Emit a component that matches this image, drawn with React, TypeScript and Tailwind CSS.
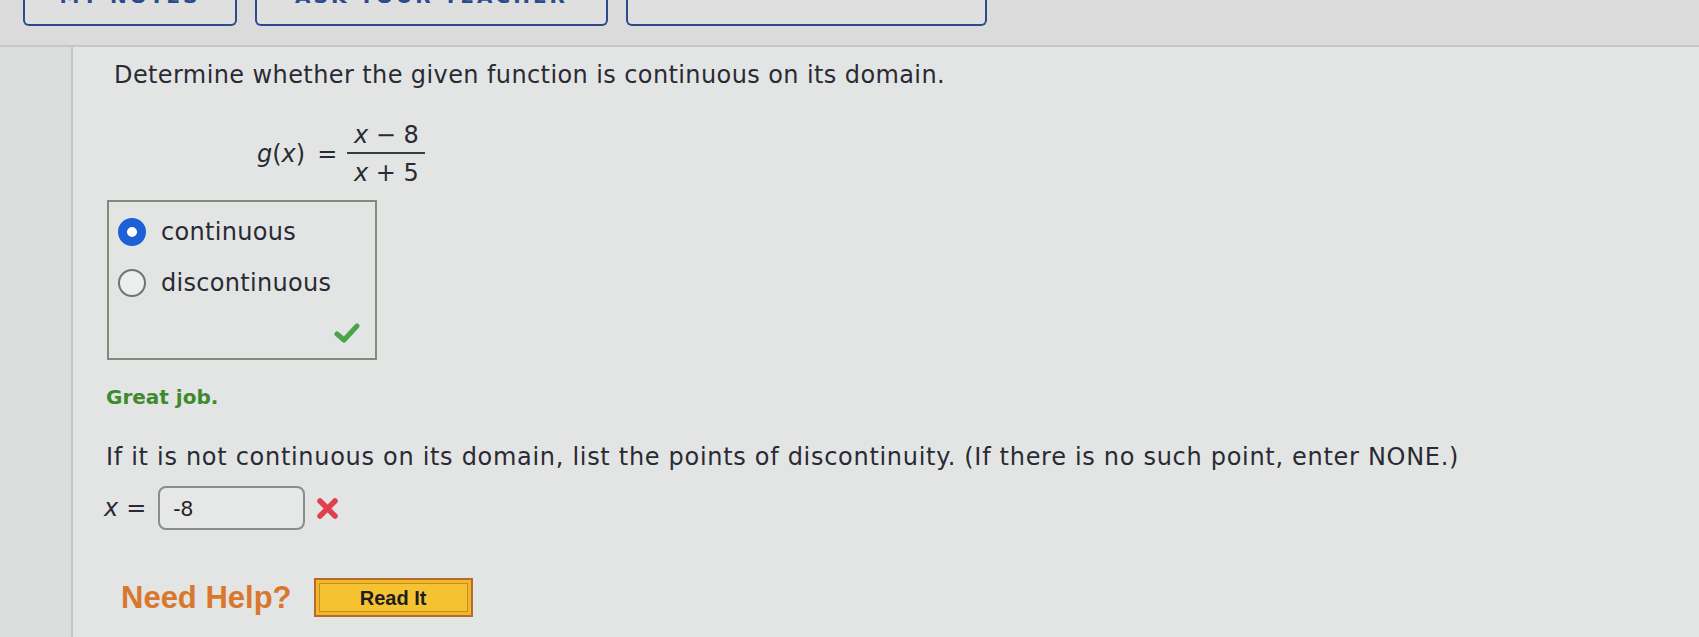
import React from "react";

const dv = { fontFamily: '"DejaVu Sans", Verdana, sans-serif' };
const lib = { fontFamily: '"Liberation Sans", Arial, sans-serif' };

function TopButton({ w, label }: { w: string; label?: string }) {
  return (
    <div
      className={`${w} h-[26px] border-2 border-t-0 border-[#2b4b8c] rounded-b-[6px] bg-[#dedfde] overflow-hidden flex justify-center items-start`}
    >
      {label ? (
        <span
          className="-mt-[14px] text-[20px] leading-[20px] font-bold tracking-[3px] text-[#2b4b8c]"
          style={dv}
        >
          {label}
        </span>
      ) : null}
    </div>
  );
}

function Check() {
  return (
    <svg width="26" height="22" viewBox="0 0 26 22">
      <path
        d="M3 12 L10 18 L23 4"
        fill="none"
        stroke="#4aa54a"
        strokeWidth="5"
        strokeLinecap="round"
        strokeLinejoin="round"
      />
    </svg>
  );
}

function RedX() {
  return (
    <svg width="23" height="23" viewBox="0 0 23 23">
      <path
        d="M4 4 L19 19 M19 4 L4 19"
        fill="none"
        stroke="#e0404c"
        strokeWidth="5.5"
        strokeLinecap="round"
      />
    </svg>
  );
}

export default function App() {
  return (
    <div className="w-[1699px] h-[637px] overflow-hidden bg-[#e3e5e4] flex flex-col text-[#2a2a35]" style={dv}>
      {/* top strip */}
      <div className="h-[47px] shrink-0 bg-[#dadbda] border-b-2 border-[#c6c8c7] flex items-start pl-[23px] gap-[18px]">
        <TopButton w="w-[214px]" label="MY NOTES" />
        <TopButton w="w-[353px]" label="ASK YOUR TEACHER" />
        <TopButton w="w-[361px]" />
      </div>

      <div className="flex flex-1">
        {/* left margin */}
        <div className="w-[73px] shrink-0 bg-[#dcdedd] border-r-2 border-[#c4c6c5]" />

        {/* main */}
        <div className="flex-1 flex flex-col">
          <div className="mt-[14px] ml-[41px] text-[24px] leading-[28px] tracking-[0.4px]">
            Determine whether the given function is continuous on its domain.
          </div>

          {/* formula */}
          <div className="mt-[34px] ml-[184px] flex items-center text-[24px] leading-[24px]">
            <span className="italic">g</span>
            <span>(</span>
            <span className="italic">x</span>
            <span>)</span>
            <span className="ml-[12px] mr-[10px]">=</span>
            <div className="flex flex-col items-center">
              <div className="px-[4px]">
                <span className="italic">x</span> − 8
              </div>
              <div className="mt-[5px] w-[78px] h-[2px] bg-[#3a3a42]" />
              <div className="mt-[7px] px-[4px]">
                <span className="italic">x</span> + 5
              </div>
            </div>
          </div>

          {/* answer box */}
          <div className="mt-[15px] ml-[34px] w-[270px] h-[160px] border-2 border-[#7d8f7b] flex flex-col pt-[16px] pl-[9px] pr-[15px]">
            <div className="flex items-center h-[28px]">
              <div className="w-[28px] h-[28px] rounded-full border-[9px] border-[#1d5fd6] bg-white shrink-0" />
              <span className="ml-[15px] text-[24px] leading-[28px] tracking-[0.3px]">continuous</span>
            </div>
            <div className="flex items-center h-[28px] mt-[23px]">
              <div className="w-[28px] h-[28px] rounded-full border-2 border-[#727272] bg-[#eceeed] shrink-0" />
              <span className="ml-[15px] text-[24px] leading-[28px] tracking-[0.3px]">discontinuous</span>
            </div>
            <div className="flex justify-end mt-[25px]">
              <Check />
            </div>
          </div>

          <div className="mt-[25px] ml-[33px] text-[20px] leading-[24px] font-bold text-[#3d8a2e]">
            Great job.
          </div>

          <div className="mt-[34px] ml-[33px] text-[24px] leading-[28px] tracking-[0.7px]">
            If it is not continuous on its domain, list the points of discontinuity. (If there is no such point, enter NONE.)
          </div>

          <div className="mt-[15px] ml-[31px] flex items-center">
            <span className="italic text-[24px] leading-[28px]">x</span>
            <span className="ml-[8px] text-[24px] leading-[28px]">=</span>
            <div className="ml-[12px] w-[147px] h-[44px] border-2 border-[#8a8d8f] rounded-[8px] bg-[#e6e8e7] flex items-center pl-[13px]">
              <span className="text-[22px] text-[#222]" style={lib}>-8</span>
            </div>
            <div className="ml-[11px] flex items-center">
              <RedX />
            </div>
          </div>

          <div className="mt-[48px] ml-[48px] flex items-center">
            <span className="text-[31px] leading-[36px] font-bold text-[#d9772c]" style={lib}>
              Need Help?
            </span>
            <div className="ml-[22px] w-[159px] h-[39px] border-2 border-[#b86a28] bg-[#f0b82c] p-[3px]">
              <div className="w-full h-full border border-[#c48f1f] bg-[#f5c232] flex items-center justify-center">
                <span className="text-[20px] leading-[20px] font-bold text-[#1e1e1e]" style={lib}>
                  Read It
                </span>
              </div>
            </div>
          </div>
        </div>
      </div>
    </div>
  );
}
